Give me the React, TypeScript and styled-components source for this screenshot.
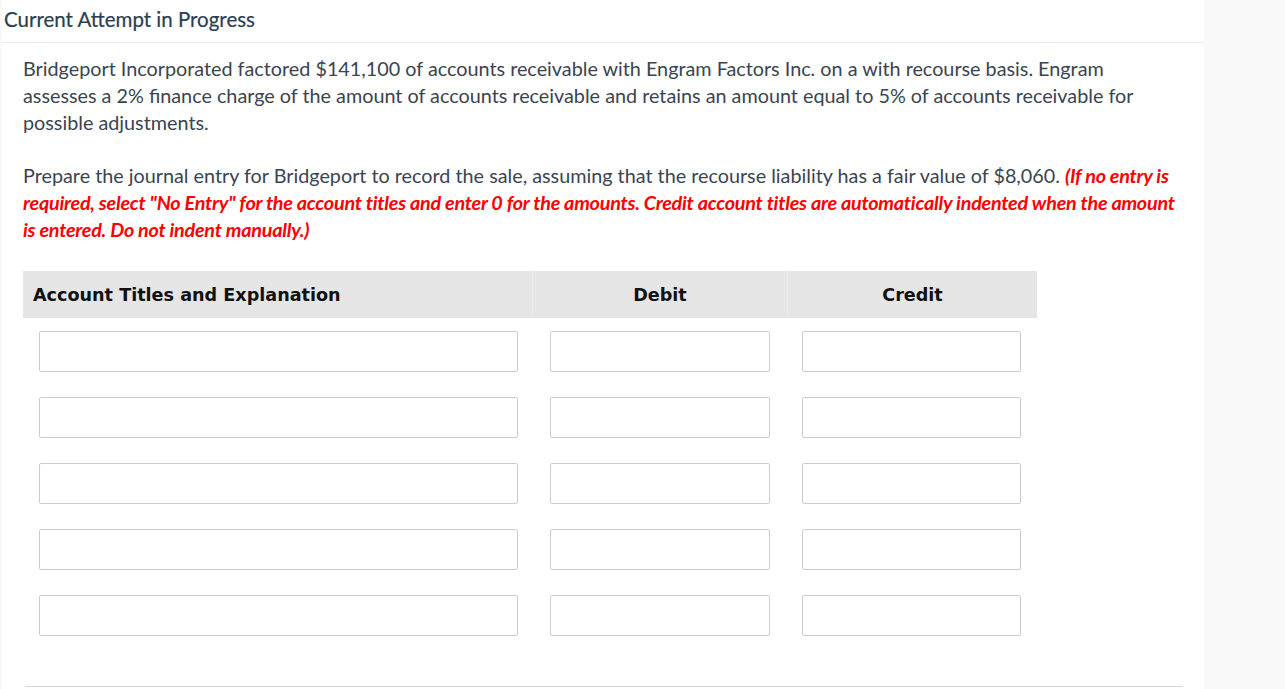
import React from 'react'
import styled, { createGlobalStyle } from 'styled-components'

const GlobalStyle = createGlobalStyle`
  html, body {
    margin: 0;
    padding: 0;
    background: #f9f9f9;
  }
  body {
    font-family: Lato, 'Open Sans', sans-serif;
  }
`

const Page = styled.div`
  width: 1202px;
  margin-left: 2px;
  min-height: 689px;
  background: #ffffff;
  overflow: hidden;
`

const Header = styled.div`
  height: 43px;
  border-bottom: 1px solid #ececec;
  padding: 0 0 4px 2px;
  box-sizing: border-box;
  display: flex;
  align-items: center;
  font-size: 20.5px;
  color: #2c3e50;
  -webkit-text-stroke: 0.2px #2c3e50;
`

const Body = styled.div`
  padding: 12px 0 0 21px;
`

const Paragraph = styled.p`
  margin: 0 0 26px;
  width: 1176px;
  font-size: 19.8px;
  line-height: 27px;
  color: #3b4451;
`

const Hint = styled.span`
  color: #ff0000;
  font-weight: 700;
  font-style: italic;
  letter-spacing: -0.25px;
`

const Table = styled.div`
  margin-top: 28px;
  width: 1014px;
`

const HeadRow = styled.div`
  display: grid;
  grid-template-columns: 509px 1fr 250px;
  background: #e5e5e5;
  height: 47px;
`

const HeadCell = styled.div<{ $center?: boolean }>`
  display: flex;
  align-items: center;
  justify-content: ${({ $center }) => ($center ? 'center' : 'flex-start')};
  padding-left: ${({ $center }) => ($center ? '0' : '10px')};
  font-family: 'DejaVu Sans', Verdana, sans-serif;
  font-weight: 700;
  font-size: 17.6px;
  color: #111;
  border-left: ${({ $center }) => ($center ? '1px solid #ececec' : 'none')};
`

const Row = styled.div`
  display: grid;
  grid-template-columns: 509px 1fr 250px;
  padding: 13px 0 12px;
`

const Cell = styled.div<{ $pl: number; $pr: number }>`
  padding-left: ${({ $pl }) => $pl}px;
  padding-right: ${({ $pr }) => $pr}px;
`

const Field = styled.input`
  display: block;
  width: 100%;
  height: 41px;
  box-sizing: border-box;
  border: 1px solid #cccccc;
  border-radius: 2px;
  background: #fff;
  font-family: Lato, sans-serif;
  font-size: 15px;
  outline: none;
`

const BottomRule = styled.div`
  margin: 38px 0 0 2px;
  width: 1158px;
  border-top: 1px solid #d6d6d6;
`

const rows = [0, 1, 2, 3, 4]

export default function App() {
  return (
    <>
      <GlobalStyle />
      <Page>
        <Header>Current Attempt in Progress</Header>
        <Body>
          <Paragraph>
            Bridgeport Incorporated factored $141,100 of accounts receivable with Engram Factors Inc. on a with recourse basis. Engram
            <br />
            assesses a 2% finance charge of the amount of accounts receivable and retains an amount equal to 5% of accounts receivable for
            <br />
            possible adjustments.
          </Paragraph>
          <Paragraph>
            Prepare the journal entry for Bridgeport to record the sale, assuming that the recourse liability has a fair value of $8,060.{' '}
            <Hint>
              (If no entry is
              <br />
              required, select "No Entry" for the account titles and enter 0 for the amounts. Credit account titles are automatically
              indented when the amount
              <br />
              is entered. Do not indent manually.)
            </Hint>
          </Paragraph>
          <Table>
            <HeadRow>
              <HeadCell>Account Titles and Explanation</HeadCell>
              <HeadCell $center>Debit</HeadCell>
              <HeadCell $center>Credit</HeadCell>
            </HeadRow>
            {rows.map((r) => (
              <Row key={r}>
                <Cell $pl={16} $pr={14}>
                  <Field type="text" />
                </Cell>
                <Cell $pl={18} $pr={17}>
                  <Field type="text" />
                </Cell>
                <Cell $pl={15} $pr={16}>
                  <Field type="text" />
                </Cell>
              </Row>
            ))}
          </Table>
          <BottomRule />
        </Body>
      </Page>
    </>
  )
}
